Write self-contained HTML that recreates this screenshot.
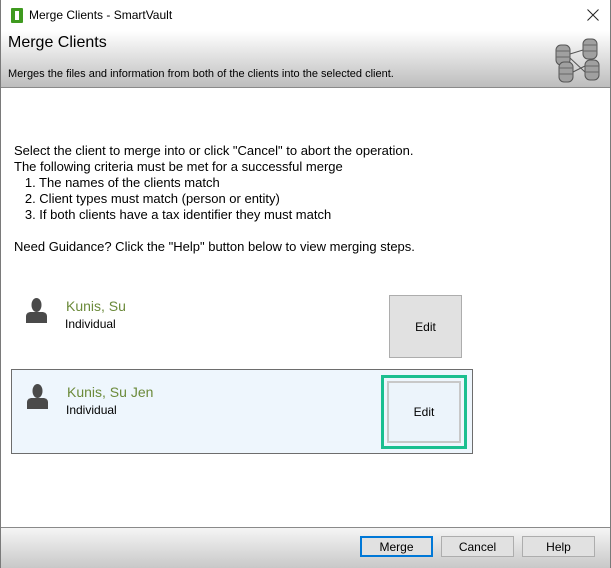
<!DOCTYPE html>
<html><head><style>
*{margin:0;padding:0;box-sizing:border-box}
body{width:611px;height:568px;position:relative;background:#fff;font-family:"Liberation Sans",sans-serif;overflow:hidden}
.a{position:absolute}
.win{left:0;top:0;width:611px;height:568px;border:1px solid #7a7a7a;border-top:none}
.btn{position:absolute;background:#e1e1e1;border:1px solid #adadad;font-size:12px;color:#000;display:flex;align-items:center;justify-content:center}
.t{font-size:13px;color:#000;left:14px;line-height:16px}
.name{font-size:14px;color:#6b8a3a}
.ind{font-size:12px;color:#000}
</style></head><body>
<div class="a win"></div>
<div class="a" style="left:11px;top:8px;width:12px;height:15px;background:#3f9a1f;border-radius:1px"></div>
<div class="a" style="left:15px;top:11px;width:4px;height:9px;background:#fff"></div>
<div class="a" style="left:29px;top:8px;font-size:12px;color:#000">Merge Clients - SmartVault</div>
<svg class="a" style="left:587px;top:9px" width="12" height="12" viewBox="0 0 12 12"><path d="M0.5 0.5 L11.5 11.5 M11.5 0.5 L0.5 11.5" stroke="#222" stroke-width="1"/></svg>
<div class="a" style="left:1px;top:31px;width:609px;height:57px;background:linear-gradient(#ffffff,#bdbdbd);border-bottom:1px solid #8a8a8a"></div>
<div class="a" style="left:8px;top:34px;font-size:16px;color:#000">Merge Clients</div>
<div class="a" style="left:8px;top:68px;font-size:11px;color:#000">Merges the files and information from both of the clients into the selected client.</div>
<svg class="a" style="left:553px;top:36px" width="52" height="50" viewBox="0 0 52 50">
<path d="M17 18 L30 14 M20 36 L32 30 M17 22 L32 36" stroke="#555" fill="none"/>
<g fill="#a0a0a0" stroke="#555" stroke-width="1">
<rect x="3" y="9" width="14" height="20" rx="5"/><rect x="30" y="3" width="14" height="20" rx="5"/>
<rect x="6" y="26" width="14" height="20" rx="5"/><rect x="32" y="24" width="14" height="20" rx="5"/></g>
<g stroke="#666" fill="none"><path d="M3 15h14M3 21h14M30 9h14M30 15h14M6 32h14M6 38h14M32 30h14M32 36h14"/></g>
</svg>
<div class="a t" style="top:143px">Select the client to merge into or click "Cancel" to abort the operation.<br>The following criteria must be met for a successful merge<br>&nbsp;&nbsp;&nbsp;1. The names of the clients match<br>&nbsp;&nbsp;&nbsp;2. Client types must match (person or entity)<br>&nbsp;&nbsp;&nbsp;3. If both clients have a tax identifier they must match<br><br>Need Guidance? Click the "Help" button below to view merging steps.</div>
<svg class="a" style="left:26px;top:298px" width="21" height="25" viewBox="0 0 21 25"><ellipse cx="10.5" cy="7" rx="5" ry="7" fill="#4a4a4a"/><path d="M0 25 V18 Q0 15 4 14 L17 14 Q21 15 21 18 V25Z" fill="#4a4a4a"/></svg>
<div class="a name" style="left:66px;top:298px">Kunis, Su</div>
<div class="a ind" style="left:65px;top:317px">Individual</div>
<div class="btn" style="left:389px;top:295px;width:73px;height:63px">Edit</div>
<div class="a" style="left:11px;top:369px;width:462px;height:85px;background:#eef6fd;border:1px solid #6d6d6d"></div>
<svg class="a" style="left:27px;top:384px" width="21" height="25" viewBox="0 0 21 25"><ellipse cx="10.5" cy="7" rx="5" ry="7" fill="#4a4a4a"/><path d="M0 25 V18 Q0 15 4 14 L17 14 Q21 15 21 18 V25Z" fill="#4a4a4a"/></svg>
<div class="a name" style="left:67px;top:384px">Kunis, Su Jen</div>
<div class="a ind" style="left:66px;top:403px">Individual</div>
<div class="a" style="left:381px;top:375px;width:86px;height:74px;border:3px solid #1bbf90"></div>
<div class="btn" style="left:387px;top:381px;width:74px;height:62px;background:#ecf4fb;border:2px solid #c8c8c8">Edit</div>
<div class="a" style="left:1px;top:527px;width:609px;height:41px;background:linear-gradient(#f5f5f5,#c8c8c8);border-top:1px solid #8a8a8a"></div>
<div class="btn" style="left:360px;top:536px;width:73px;height:21px;border:2px solid #0078d7">Merge</div>
<div class="btn" style="left:441px;top:536px;width:73px;height:21px">Cancel</div>
<div class="btn" style="left:522px;top:536px;width:73px;height:21px">Help</div>
</body></html>
